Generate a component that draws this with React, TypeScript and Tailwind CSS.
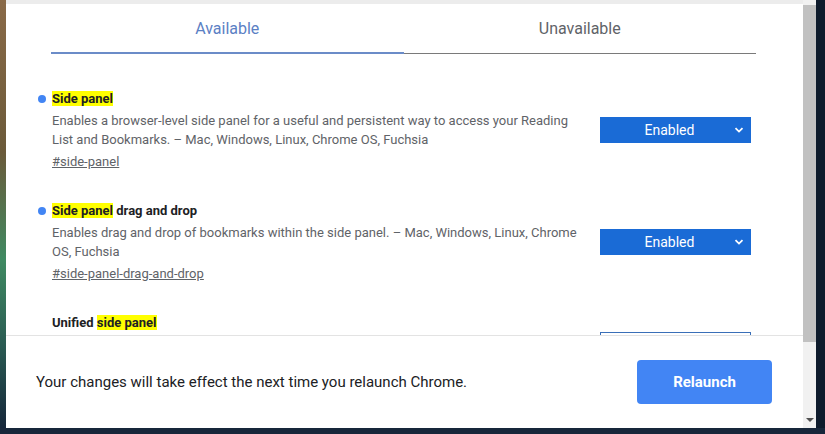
import React from "react";

const flags = [
  {
    pre: "",
    mark: "Side panel",
    rest: "",
    desc: "Enables a browser-level side panel for a useful and persistent way to access your Reading List and Bookmarks. – Mac, Windows, Linux, Chrome OS, Fuchsia",
    link: "#side-panel",
  },
  {
    pre: "",
    mark: "Side panel",
    rest: " drag and drop",
    desc: "Enables drag and drop of bookmarks within the side panel. – Mac, Windows, Linux, Chrome OS, Fuchsia",
    link: "#side-panel-drag-and-drop",
  },
];

function Chevron() {
  return (
    <svg width="10" height="10" viewBox="0 0 10 10" fill="none">
      <path d="M1.5 3.2 L5 6.6 L8.5 3.2" stroke="white" strokeWidth="1.8" />
    </svg>
  );
}

function Title({ pre, mark, rest, bullet }: { pre: string; mark: string; rest: string; bullet: boolean }) {
  return (
    <div className="flex items-center h-5 text-[13px] font-bold text-[#202124]">
      <span className={`w-2 h-2 rounded-full mr-[6px] ${bullet ? "bg-[#4285f4]" : "bg-transparent"}`} />
      <span className="whitespace-pre">
        {pre}
        <span className="bg-[#ffff00]">{mark}</span>
        {rest}
      </span>
    </div>
  );
}

function Flag({ f }: { f: (typeof flags)[number] }) {
  return (
    <div className="flex items-center mb-[30px]">
      <div className="flex-1">
        <Title pre={f.pre} mark={f.mark} rest={f.rest} bullet />
        <p className="mt-[2px] ml-[14px] w-[535px] text-[13px] leading-[19px] text-[#5f6368]">{f.desc}</p>
        <a className="block mt-[3px] ml-[14px] text-[13px] leading-[19px] text-[#5f6368] underline">{f.link}</a>
      </div>
      <div className="w-[151px] h-[26px] mr-[52px] flex items-center relative bg-[#1a6bd6] text-white">
        <span className="flex-1 text-center text-[14px] pr-[12px]">Enabled</span>
        <span className="absolute right-[7px] top-[8px]">
          <Chevron />
        </span>
      </div>
    </div>
  );
}

export default function App() {
  return (
    <div
      className="w-[825px] h-[434px] flex flex-col overflow-hidden bg-[linear-gradient(180deg,#8a6a48_0%,#6b5a3a_35%,#3f8a62_60%,#2a5a52_80%,#132238_100%)]"
      style={{ fontFamily: "Roboto, 'Noto Sans', sans-serif" }}
    >
      <div className="flex h-[428px]">
        <div className="w-[6px]" />
        <div className="flex-1 flex bg-white">
          <div className="flex-1 flex flex-col min-w-0">
            <div className="h-[4px] bg-[#ececec]" />
            <div className="flex-1 overflow-hidden pl-[32px]">
              <div className="flex ml-[13px] w-[705px]">
                <div className="flex-1 text-center pt-[15px] pb-[13px] leading-5 text-[16px] text-[#5b80c4] border-b-2 border-[#6b8cc8]">
                  Available
                </div>
                <div className="flex-1 text-center pt-[15px] pb-[14px] leading-5 text-[16px] text-[#5f6368] border-b border-[#7a7a7a]">
                  Unavailable
                </div>
              </div>
              <div className="mt-[35px]">
                {flags.map((f, i) => (
                  <Flag key={i} f={f} />
                ))}
                <div className="flex items-start">
                  <div className="flex-1">
                    <Title pre="Unified " mark="side panel" rest="" bullet={false} />
                  </div>
                  <div className="w-[151px] h-[26px] mr-[52px] mt-[19px] bg-white border border-[#3a6fb8]" />
                </div>
              </div>
            </div>
            <div className="h-[93px] border-t border-[#e3e3e3] flex items-center justify-between pl-[30px] pr-[31px]">
              <span className="text-[15px] text-[#202124]">
                Your changes will take effect the next time you relaunch Chrome.
              </span>
              <button className="w-[135px] h-[44px] rounded bg-[#4285f4] text-white font-bold text-[15px]">
                Relaunch
              </button>
            </div>
          </div>
          <div className="w-[13px] bg-[#f1f1f1] flex flex-col items-center">
            <div className="mt-[5px] w-full h-[337px] bg-[#c1c1c1]" />
            <div className="flex-1" />
            <div className="mb-[6px] w-0 h-0 border-l-[4px] border-r-[4px] border-t-[4px] border-l-transparent border-r-transparent border-t-[#505050]" />
          </div>
        </div>
        <div className="w-[9px] bg-[#0e1b2c]" />
      </div>
      <div className="flex-1 bg-[#17263a]" />
    </div>
  );
}
